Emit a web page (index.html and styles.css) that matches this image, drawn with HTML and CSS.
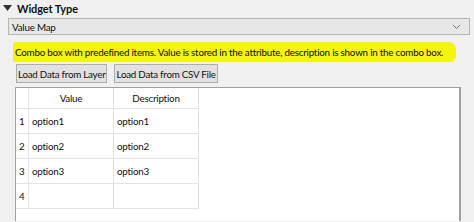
FILE: index.html
```html
<!DOCTYPE html>
<html lang="en">
<head>
    <meta charset="UTF-8">
    <title>Widget Type</title>
    <link rel="stylesheet" href="styles.css">
</head>
<body>
    <!-- Section header -->
    <div class="section-title">
        <svg class="arrow" width="9" height="7" viewBox="0 0 9 7"><polygon points="0,0 9,0 4.5,6" fill="#333"/></svg>
        <span>Widget Type</span>
    </div>

    <!-- Widget combo -->
    <div class="combo">
        <span>Value Map</span>
        <svg class="chevron" width="9" height="6" viewBox="0 0 9 6"><polyline points="1,1 4.5,4.5 8,1" fill="none" stroke="#777" stroke-width="1"/></svg>
    </div>

    <div class="hint"><span>Combo box with predefined items. Value is stored in the attribute, description is shown in the combo box.</span></div>

    <div class="buttons">
        <button>Load Data from Layer</button>
        <button>Load Data from CSV File</button>
    </div>

    <!-- Value map table -->
    <div class="frame">
        <table class="grid">
            <tr class="head"><th class="num"></th><th>Value</th><th>Description</th></tr>
            <tr><td class="num">1</td><td>option1</td><td>option1</td></tr>
            <tr><td class="num">2</td><td>option2</td><td>option2</td></tr>
            <tr><td class="num">3</td><td>option3</td><td>option3</td></tr>
            <tr><td class="num">4</td><td></td><td></td></tr>
        </table>
    </div>
</body>
</html>
```

FILE: styles.css
```css
body { margin: 0; background: #f0f0f0; font-family: Lato, sans-serif; font-size: 9.8px; letter-spacing: -0.22px; color: #111; overflow: hidden; }

.section-title { display: flex; align-items: center; height: 14px; padding: 1px 0 0 3px; font-weight: bold; font-size: 11px; letter-spacing: -0.1px; }
.section-title .arrow { margin-right: 5px; }

.combo { display: flex; align-items: center; justify-content: space-between; height: 15px; margin: 3px 4px 0 8px; padding: 0 8px 0 3px; border: 1px solid #b4b4b4; background: #e7e7e7; }

.hint { margin: 7px 0 0 13px; }
.hint span { display: inline-block; white-space: nowrap; padding: 4px 13px 4px 2px; background: #f4f40c; border-radius: 3px 8px 6px 2px; }

.buttons { display: flex; gap: 7px; margin: 2px 0 0 16px; }
.buttons button { height: 19px; padding: 0 1px; font: inherit; letter-spacing: -0.25px; color: #111; background: #e1e1e1; border: 1px solid #adadad; }

.frame { margin: 4px 0 0 15px; width: 443px; height: 133px; background: #fff; border: 1px solid #a0a0a0; border-right-width: 2px; border-bottom: none; }

.grid { border-collapse: collapse; }
.grid td, .grid th { height: 24px; padding: 0 3px; border: 1px solid #e3e3e3; text-align: left; font-weight: normal; }
.grid .head th { border-top: none; border-bottom: none; height: 20px; text-align: center; }
.grid .num { width: 6px; border-left: none; background: #fff; }
.grid td:nth-child(2), .grid th:nth-child(2), .grid td:nth-child(3), .grid th:nth-child(3) { width: 78px; }
```
